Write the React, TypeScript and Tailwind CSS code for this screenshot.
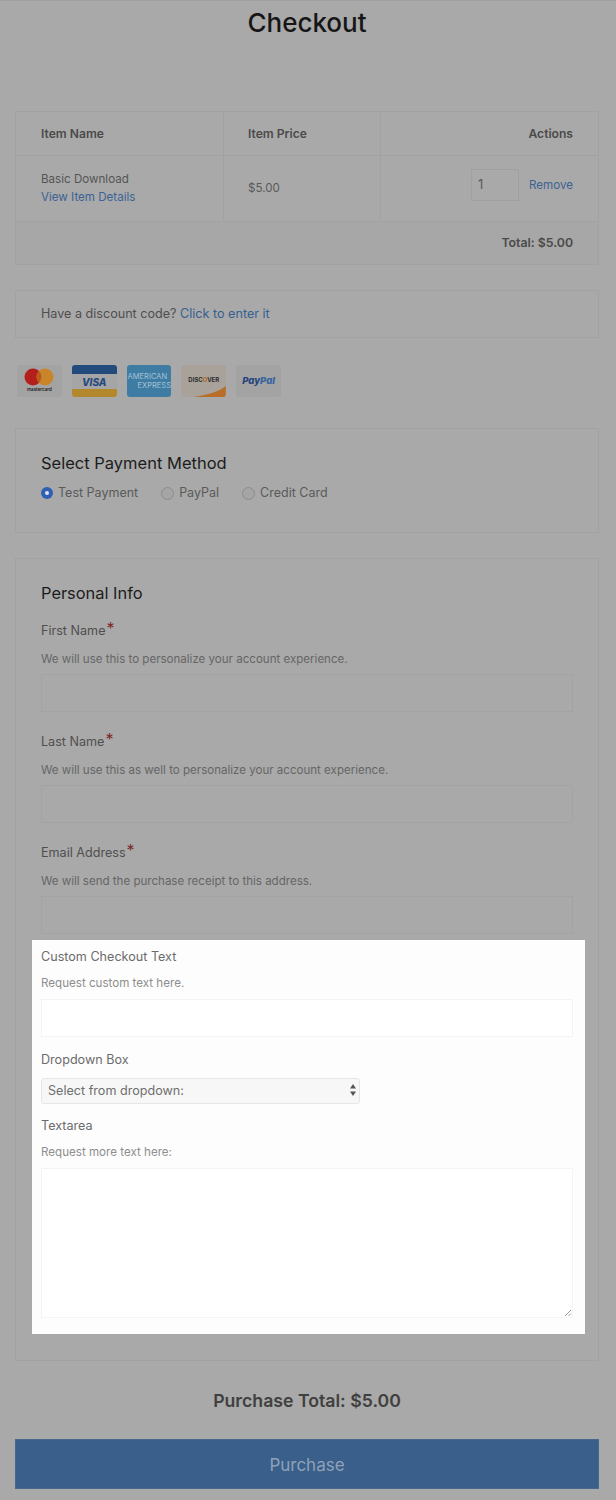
import React from 'react';

function Card({ className, children }: { className: string; children: React.ReactNode }) {
  return <div className={`border border-[#a2a2a2] bg-[#a9a9a9] ${className}`}>{children}</div>;
}

function Field({ label, help, top }: { label: string; help: string; top: string }) {
  return (
    <div className={top}>
      <div className="flex h-5 items-center text-[12.6px] leading-5 text-[#4f4f4f]">
        {label}
        <span className="relative -top-[3px] ml-px text-[16px] leading-none text-[#7c2a2a]">*</span>
      </div>
      <p className="mt-[8px] h-5 text-[11.55px] leading-5 text-[#666666]">{help}</p>
      <div className="mt-[5px] h-[38px] border border-[#a3a3a3] bg-[#a9a9a9]" />
    </div>
  );
}

function Radio({ label, checked }: { label: string; checked?: boolean }) {
  return (
    <label className="flex items-center gap-[5px] text-[12.5px] leading-5 text-[#5a5a5a]">
      {checked ? (
        <span className="flex h-3 w-3 items-center justify-center rounded-full bg-[#2f60b4]">
          <span className="h-1 w-1 rounded-full bg-[#e4e4e4]" />
        </span>
      ) : (
        <span className="h-[13px] w-[13px] rounded-full border border-[#8c8c8c] bg-[#a5a5a5]" />
      )}
      {label}
    </label>
  );
}

function MasterCard() {
  return (
    <div className="relative flex h-8 w-[44.8px] flex-col items-center rounded-[3px] bg-[#a3a3a3]">
      <svg viewBox="0 0 30 18" className="mt-[3px] h-[18px] w-[30px]">
        <circle cx="9" cy="9" r="8.5" fill="#b3201b" />
        <circle cx="21" cy="9" r="8.5" fill="#c9852a" />
        <path d="M15 3a8.5 8.5 0 0 1 0 12 8.5 8.5 0 0 1 0-12z" fill="#bb5a1f" />
      </svg>
      <span className="mt-px text-[4.5px] font-semibold leading-[6px] text-[#222222]">mastercard</span>
    </div>
  );
}

function Visa() {
  return (
    <div className="flex h-8 w-[44.8px] flex-col overflow-hidden rounded-[3px] bg-[#a5a5a5]">
      <div className="h-[9px] bg-[#234a7c]" />
      <div className="flex h-[15px] items-center justify-center text-[10px] font-extrabold italic leading-none text-[#264a80]">VISA</div>
      <div className="h-2 bg-[#b3872c]" />
    </div>
  );
}

function Amex() {
  return (
    <div className="flex h-8 w-[44.8px] flex-col justify-center overflow-hidden rounded-[3px] bg-[#3f7ca3] pl-px text-[7.5px] leading-[9px] text-[#a5c3d6]">
      <span className="whitespace-nowrap">AMERICAN</span>
      <span className="whitespace-nowrap pl-[10px]">EXPRESS</span>
    </div>
  );
}

function Discover() {
  return (
    <div className="relative h-8 w-[44.8px] overflow-hidden rounded-[3px] bg-[#a8a29b]">
      <div className="pt-[10px] text-center text-[6px] font-bold leading-[10px] text-[#2d2d2d]">
        DISC<span className="text-[#b5651d]">O</span>VER
      </div>
      <svg viewBox="0 0 45 32" className="absolute inset-0 h-8 w-[44.8px]">
        <path d="M12 32C26 30 38 27 45 21V32z" fill="#b86e28" />
      </svg>
    </div>
  );
}

function PayPal() {
  return (
    <div className="flex h-8 w-[44.8px] items-center justify-center rounded-[3px] bg-[#a3a3a3] text-[9.5px] font-extrabold italic leading-none">
      <span className="text-[#24457c]">Pay</span>
      <span className="text-[#33649c]">Pal</span>
    </div>
  );
}

export default function App() {
  return (
    <div className="h-[1500px] overflow-hidden border-t border-[#a0a0a0] bg-[#a9a9a9] pl-[15px] pr-[17px] font-['Inter','Liberation_Sans',sans-serif] text-[#4a4a4a]">
      <h1 className="h-[43px] text-center text-[26px] font-medium leading-[43px] text-[#161616]">Checkout</h1>

      <Card className="mt-[67px] h-[154px] text-[11.6px]">
        <div className="flex h-[44px] border-b border-[#a2a2a2] text-[12.1px] font-semibold">
          <div className="flex w-[208px] items-center border-r border-[#a2a2a2] pl-[25px] pt-px">Item Name</div>
          <div className="flex w-[157px] items-center border-r border-[#a2a2a2] pl-6 pt-px">Item Price</div>
          <div className="flex flex-1 items-center justify-end pr-[25px] pt-px">Actions</div>
        </div>
        <div className="flex h-[66px] border-b border-[#a2a2a2]">
          <div className="flex w-[208px] flex-col justify-center border-r border-[#a2a2a2] pb-[2px] pl-[25px] leading-[18px]">
            <span className="text-[#555555]">Basic Download</span>
            <a className="text-[#3b6394]">View Item Details</a>
          </div>
          <div className="flex w-[157px] items-center border-r border-[#a2a2a2] pl-6 pt-px text-[#5a5a5a]">$5.00</div>
          <div className="flex flex-1 items-center justify-end gap-[10px] pb-[8px] pr-[25px]">
            <div className="flex h-8 w-[48px] items-center border border-[#a0a0a0] pl-[6px] text-[13px] text-[#5a5a5a]">1</div>
            <a className="pt-[2px] text-[#3b6394]">Remove</a>
          </div>
        </div>
        <div className="flex h-[42px] items-center justify-end bg-[#a7a7a7] pr-[25px] text-[12.3px] font-semibold">Total: $5.00</div>
      </Card>

      <Card className="mt-[25px] flex h-[48px] items-center pl-[25px] text-[12.6px] text-[#4f4f4f]">
        Have a discount code?&nbsp;<a className="text-[#36608f]">Click to enter it</a>
      </Card>

      <div className="ml-[2px] mt-[27px] flex h-8 gap-[10px]">
        <MasterCard />
        <Visa />
        <Amex />
        <Discover />
        <PayPal />
      </div>

      <Card className="mt-[31px] h-[105px] px-[25px] pt-[24px]">
        <h2 className="h-5 text-[16.5px] leading-5 text-[#1c1c1c]">Select Payment Method</h2>
        <div className="mt-[10px] flex gap-[23px]">
          <Radio label="Test Payment" checked />
          <Radio label="PayPal" />
          <Radio label="Credit Card" />
        </div>
      </Card>

      <Card className="mt-[25px] h-[803px] px-[25px] pt-[24px]">
        <h2 className="h-5 text-[16.4px] leading-5 text-[#1c1c1c]">Personal Info</h2>
        <Field top="mt-[18px]" label="First Name" help="We will use this to personalize your account experience." />
        <Field top="mt-[20px]" label="Last Name" help="We will use this as well to personalize your account experience." />
        <Field top="mt-[20px]" label="Email Address" help="We will send the purchase receipt to this address." />

        <div className="-ml-[9px] -mr-[12px] mt-[6px] h-[394px] bg-[#fdfdfd] pl-[9px] pr-[12px] pt-[7px]">
          <div className="h-5 text-[12.6px] leading-5 text-[#6b6b6b]">Custom Checkout Text</div>
          <p className="mt-[6px] h-5 text-[11.6px] leading-5 text-[#8e8e8e]">Request custom text here.</p>
          <input className="mt-[6px] block h-[38px] w-full border border-[#f4f4f4] bg-white" />
          <div className="mt-[13px] h-5 text-[12.6px] leading-5 text-[#6b6b6b]">Dropdown Box</div>
          <div className="relative mt-[7px] h-[26px] w-[319px]">
            <select className="h-full w-full appearance-none rounded-[3px] border border-[#e6e6e6] bg-[#f7f7f7] pl-[6px] text-[12.6px] text-[#6e6e6e]">
              <option>Select from dropdown:</option>
            </select>
            <svg viewBox="0 0 8 14" className="absolute right-[3px] top-[6px] h-[14px] w-2">
              <path d="M4 1l3 4.5H1zM4 13L1 8.5h6z" fill="#555555" />
            </svg>
          </div>
          <div className="mt-[13px] h-5 text-[12.6px] leading-5 text-[#6b6b6b]">Textarea</div>
          <p className="mt-[6px] h-5 text-[11.6px] leading-5 text-[#8e8e8e]">Request more text here:</p>
          <div className="relative mt-[6px]">
            <textarea className="block h-[150px] w-full resize-none border border-[#f4f4f4] bg-white" />
            <svg viewBox="0 0 8 8" className="absolute bottom-[1px] right-[1px] h-2 w-2">
              <path d="M1 7l6-6M4.5 7L7 4.5" stroke="#9a9a9a" strokeWidth="1" fill="none" />
            </svg>
          </div>
        </div>
      </Card>

      <div className="mt-[26px] text-center text-[17.7px] font-semibold leading-7 text-[#404040]">Purchase Total: $5.00</div>

      <button className="mt-6 block h-[50px] w-full border border-[#46688f] bg-[#3a5f8b] pt-[4px] text-[17px] text-[#8fa2b8]">Purchase</button>
    </div>
  );
}
